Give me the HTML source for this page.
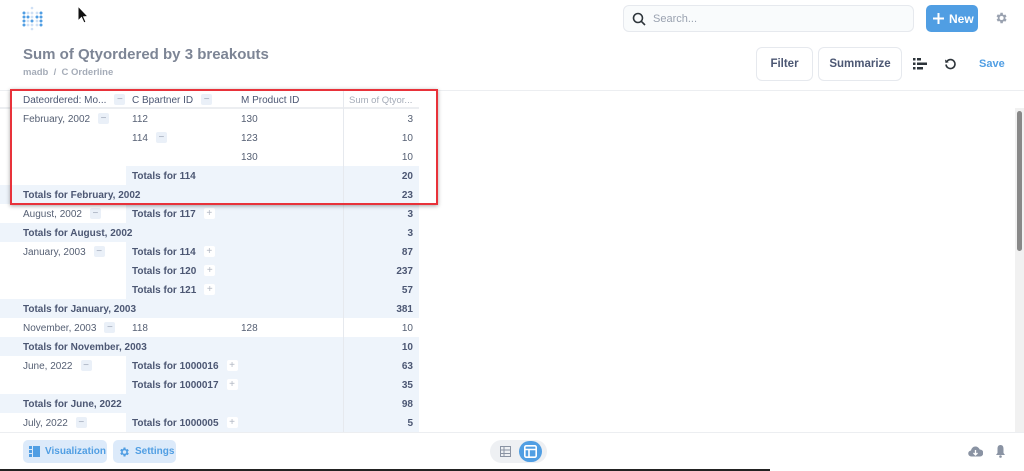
<!DOCTYPE html>
<html><head><meta charset="utf-8"><style>
*{box-sizing:border-box;margin:0;padding:0}
body{width:1024px;height:471px;overflow:hidden;background:#fff;font-family:"Liberation Sans",sans-serif;color:#4c5773;position:relative}
.abs{position:absolute}
.search{left:623px;top:5px;width:291px;height:27px;border:1px solid #e6e9ee;background:#f9fbfc;border-radius:6px}
.search span{position:absolute;left:29px;top:7px;font-size:11px;color:#9aa2b0}
.new{left:926px;top:5px;width:52px;height:27px;background:#509ee3;border-radius:5px;color:#fff;font-size:12px;font-weight:bold}
.title{left:23px;top:46px;font-size:15px;font-weight:bold;color:#7d8595}
.crumb{left:23px;top:67px;font-size:9.5px;color:#a5acb8;font-weight:bold}
.btn{top:47px;height:34px;border:1px solid #e6e9ee;border-radius:6px;font-size:11.5px;font-weight:bold;color:#4c5773;text-align:center;line-height:32px}
.hline{left:0;width:1024px;height:1px;background:#eceef1}
.row{position:absolute;left:0;width:419px;height:19px;font-size:10px;line-height:21px}
.c{position:absolute;top:0;height:19px;white-space:nowrap}
.blue{background:#eef4fb}
.b{font-weight:bold;color:#4c5773}
.n{color:#555f73}
.pm{position:relative;top:-1px;display:inline-block;width:11px;height:11px;background:#eaf0f8;border-radius:2px;margin-left:8px;vertical-align:middle;text-align:center;line-height:11px;font-size:10px;color:#a0a8b8;font-weight:normal}
.pm2{background:#fff;color:#b0b6c2}
.num{right:0;text-align:right;padding-right:6px;width:76px;left:343px}
</style></head><body>
<svg class="abs" style="left:20px;top:4px" width="26" height="30">
<g fill="#cfe0f5"><circle cx="12" cy="4" r="1.3"/><circle cx="12" cy="25" r="1.3"/>
<circle cx="8" cy="9" r="1.4"/><circle cx="12" cy="9" r="1.4"/><circle cx="17" cy="9" r="1.4"/>
<circle cx="12" cy="13" r="1.4"/><circle cx="8" cy="17" r="1.4"/><circle cx="17" cy="17" r="1.4"/>
<circle cx="8" cy="21" r="1.4"/><circle cx="12" cy="21" r="1.4"/><circle cx="17" cy="21" r="1.4"/></g>
<g fill="#509ee3"><circle cx="4" cy="9" r="1.5"/><circle cx="4" cy="13" r="1.5"/><circle cx="4" cy="17" r="1.5"/><circle cx="4" cy="21" r="1.5"/>
<circle cx="21" cy="9" r="1.5"/><circle cx="21" cy="13" r="1.5"/><circle cx="21" cy="17" r="1.5"/><circle cx="21" cy="21" r="1.5"/>
<circle cx="8" cy="13" r="1.5"/><circle cx="12" cy="17" r="1.5"/><circle cx="17" cy="13" r="1.5"/></g></svg>
<svg class="abs" style="left:77px;top:5px" width="12" height="20"><path d="M1 1 L1 16 L4.5 12.5 L7 18 L9 17 L6.7 11.8 L11 11.5 Z" fill="#111" stroke="#fff" stroke-width="1"/></svg>

<div class="abs search"><svg style="position:absolute;left:8px;top:6px" width="14" height="14"><circle cx="6" cy="6" r="4.5" fill="none" stroke="#2e353b" stroke-width="1.6"/><path d="M9.3 9.3L13 13" stroke="#2e353b" stroke-width="1.6"/></svg><span>Search...</span></div>
<div class="abs new"><svg style="position:absolute;left:6px;top:7px" width="13" height="13"><path d="M6.5 1v11M1 6.5h11" stroke="#fff" stroke-width="2"/></svg><span style="position:absolute;left:23px;top:7px">New</span></div>
<svg class="abs" style="left:994px;top:11px" width="14" height="14" viewBox="0 0 24 24"><path fill="#9aa2b0" d="M19.4 13a7.5 7.5 0 000-2l2.1-1.6-2-3.5-2.5 1a7.7 7.7 0 00-1.7-1L15 3h-4l-.4 2.7a7.7 7.7 0 00-1.7 1l-2.5-1-2 3.5L6.6 11a7.5 7.5 0 000 2l-2.1 1.6 2 3.5 2.5-1a7.7 7.7 0 001.7 1L11 21h4l.4-2.7a7.7 7.7 0 001.7-1l2.5 1 2-3.5zM13 15.5a3.5 3.5 0 110-7 3.5 3.5 0 010 7z"/></svg>

<div class="abs title">Sum of Qtyordered by 3 breakouts</div>
<div class="abs crumb">madb &nbsp;/&nbsp; C Orderline</div>
<div class="abs btn" style="left:756px;width:57px">Filter</div>
<div class="abs btn" style="left:818px;width:84px">Summarize</div>
<svg class="abs" style="left:913px;top:58px" width="14" height="12"><g fill="#2e353b"><rect x="0" y="0" width="2.5" height="2.5"/><rect x="4" y="0" width="4" height="2.5"/><rect x="0" y="4.5" width="2.5" height="2.5"/><rect x="4" y="4.5" width="10" height="2.5"/><rect x="0" y="9" width="2.5" height="2.5"/><rect x="4" y="9" width="6" height="2.5"/></g></svg>
<svg class="abs" style="left:944px;top:58px" width="13" height="13"><path d="M3 3.2A4.5 4.5 0 1 1 2 6.5" fill="none" stroke="#2e353b" stroke-width="1.6"/><path d="M1 1.5l0.5 3.5 3.3-0.8z" fill="#2e353b"/></svg>
<div class="abs" style="left:979px;top:58px;font-size:11px;font-weight:bold;color:#509ee3">Save</div>
<div class="abs hline" style="top:90px"></div>

<div class="row" style="top:90px;height:19px;border-bottom:2px solid #eceef1;color:#4c5773">
<div class="c" style="left:23px">Dateordered: Mo...<span class="pm">−</span></div>
<div class="c" style="left:132px">C Bpartner ID<span class="pm">−</span></div>
<div class="c" style="left:241px">M Product ID</div>
<div class="c num" style="color:#a5acb8;text-align:left;padding-left:6px;font-size:9.5px">Sum of Qtyor...</div>
</div>
<div class="abs" style="left:343px;top:90px;width:1px;height:342px;background:#e6e9ee;z-index:2"></div>

<div class="row" style="top:109px"><div class="c n" style="left:23px">February, 2002<span class="pm">−</span></div><div class="c n" style="left:132px">112</div><div class="c n" style="left:241px">130</div><div class="c num n">3</div></div>
<div class="row" style="top:128px"><div class="c n" style="left:132px">114<span class="pm">−</span></div><div class="c n" style="left:241px">123</div><div class="c num n">10</div></div>
<div class="row" style="top:147px"><div class="c n" style="left:241px">130</div><div class="c num n">10</div></div>
<div class="row" style="top:166px"><div class="c blue" style="left:126px;width:293px"></div><div class="c b" style="left:132px">Totals for 114</div><div class="c num b">20</div></div>
<div class="row blue" style="top:185px"><div class="c b" style="left:23px">Totals for February, 2002</div><div class="c num b">23</div></div>
<div class="row" style="top:204px"><div class="c blue" style="left:126px;width:293px"></div><div class="c n" style="left:23px">August, 2002<span class="pm">−</span></div><div class="c b" style="left:132px">Totals for 117<span class="pm pm2">+</span></div><div class="c num b">3</div></div>
<div class="row blue" style="top:223px"><div class="c b" style="left:23px">Totals for August, 2002</div><div class="c num b">3</div></div>
<div class="row" style="top:242px"><div class="c blue" style="left:126px;width:293px"></div><div class="c n" style="left:23px">January, 2003<span class="pm">−</span></div><div class="c b" style="left:132px">Totals for 114<span class="pm pm2">+</span></div><div class="c num b">87</div></div>
<div class="row" style="top:261px"><div class="c blue" style="left:126px;width:293px"></div><div class="c b" style="left:132px">Totals for 120<span class="pm pm2">+</span></div><div class="c num b">237</div></div>
<div class="row" style="top:280px"><div class="c blue" style="left:126px;width:293px"></div><div class="c b" style="left:132px">Totals for 121<span class="pm pm2">+</span></div><div class="c num b">57</div></div>
<div class="row blue" style="top:299px"><div class="c b" style="left:23px">Totals for January, 2003</div><div class="c num b">381</div></div>
<div class="row" style="top:318px"><div class="c n" style="left:23px">November, 2003<span class="pm">−</span></div><div class="c n" style="left:132px">118</div><div class="c n" style="left:241px">128</div><div class="c num n">10</div></div>
<div class="row blue" style="top:337px"><div class="c b" style="left:23px">Totals for November, 2003</div><div class="c num b">10</div></div>
<div class="row" style="top:356px"><div class="c blue" style="left:126px;width:293px"></div><div class="c n" style="left:23px">June, 2022<span class="pm">−</span></div><div class="c b" style="left:132px">Totals for 1000016<span class="pm pm2">+</span></div><div class="c num b">63</div></div>
<div class="row" style="top:375px"><div class="c blue" style="left:126px;width:293px"></div><div class="c b" style="left:132px">Totals for 1000017<span class="pm pm2">+</span></div><div class="c num b">35</div></div>
<div class="row blue" style="top:394px"><div class="c b" style="left:23px">Totals for June, 2022</div><div class="c num b">98</div></div>
<div class="row" style="top:413px"><div class="c blue" style="left:126px;width:293px"></div><div class="c n" style="left:23px">July, 2022<span class="pm">−</span></div><div class="c b" style="left:132px">Totals for 1000005<span class="pm pm2">+</span></div><div class="c num b">5</div></div>

<div class="abs" style="left:10px;top:89px;width:428px;height:116px;border:2px solid #e8323a;box-shadow:0 1px 4px rgba(0,0,0,.35);z-index:3"></div>

<div class="abs" style="left:1015px;top:108px;width:9px;height:324px;background:#f1f1f1"></div>
<div class="abs" style="left:1017px;top:111px;width:5px;height:140px;background:#888;border-radius:3px"></div>

<div class="abs hline" style="top:432px"></div>
<div class="abs" style="left:23px;top:440px;width:84px;height:23px;background:#dceafa;border-radius:5px;font-size:10px;font-weight:bold;color:#509ee3">
<svg style="position:absolute;left:6px;top:6px" width="11" height="11"><g fill="#509ee3"><rect x="0" y="0" width="3" height="3"/><rect x="0" y="4" width="3" height="3"/><rect x="0" y="8" width="3" height="3"/><rect x="4" y="0" width="7" height="11"/></g></svg>
<span style="position:absolute;left:22px;top:6px">Visualization</span></div>
<div class="abs" style="left:113px;top:440px;width:63px;height:23px;background:#dceafa;border-radius:5px;font-size:10px;font-weight:bold;color:#509ee3">
<svg style="position:absolute;left:5px;top:6px" width="12" height="12" viewBox="0 0 24 24"><path fill="#509ee3" d="M19.4 13a7.5 7.5 0 000-2l2.1-1.6-2-3.5-2.5 1a7.7 7.7 0 00-1.7-1L15 3h-4l-.4 2.7a7.7 7.7 0 00-1.7 1l-2.5-1-2 3.5L6.6 11a7.5 7.5 0 000 2l-2.1 1.6 2 3.5 2.5-1a7.7 7.7 0 001.7 1L11 21h4l.4-2.7a7.7 7.7 0 001.7-1l2.5 1 2-3.5zM13 15.5a3.5 3.5 0 110-7 3.5 3.5 0 010 7z"/></svg>
<span style="position:absolute;left:22px;top:6px">Settings</span></div>
<div class="abs" style="left:490px;top:440px;width:57px;height:23px;background:#eef0f3;border-radius:12px"></div>
<svg class="abs" style="left:500px;top:446px" width="11" height="11"><rect x="0.5" y="0.5" width="10" height="10" fill="none" stroke="#8a93a3"/><path d="M0.5 4h10M0.5 7.5h10M4 0.5v10" stroke="#8a93a3"/></svg>
<div class="abs" style="left:519px;top:441px;width:23px;height:21px;background:#509ee3;border-radius:11px"></div>
<svg class="abs" style="left:524px;top:445px" width="13" height="13"><rect x="0.8" y="0.8" width="11.4" height="11.4" rx="1.5" fill="none" stroke="#fff" stroke-width="1.6"/><path d="M0.8 4.5h11.4M5 4.5v7.7" stroke="#fff" stroke-width="1.6"/></svg>
<svg class="abs" style="left:968px;top:445px" width="15" height="13"><path d="M3.5 11.5A3 3 0 0 1 3 5.5a4.5 4.5 0 0 1 8.7-1A3.5 3.5 0 0 1 12 11.5z" fill="#8a93a3"/><path d="M7.5 5v5M5.5 8l2 2 2-2" stroke="#fff" stroke-width="1.3" fill="none"/></svg>
<svg class="abs" style="left:995px;top:444px" width="11" height="14"><path d="M5.5 1C3 1 2.5 3 2.5 5v4L1 11h9L8.5 9V5C8.5 3 8 1 5.5 1z" fill="#8a93a3"/><circle cx="5.5" cy="12.5" r="1.3" fill="#8a93a3"/></svg>
<div class="abs" style="left:0;top:469px;width:770px;height:2px;background:#222"></div>
</body></html>
